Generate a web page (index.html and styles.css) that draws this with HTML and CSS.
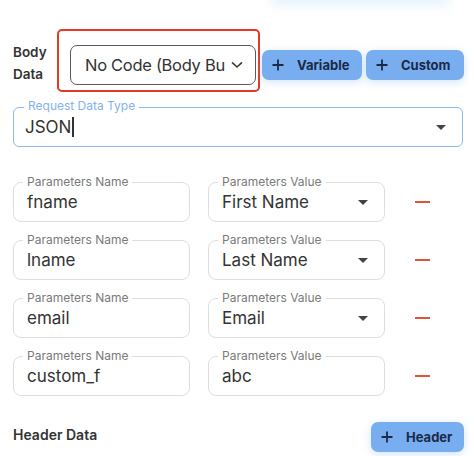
FILE: index.html
```html
<!DOCTYPE html>
<html>
<head>
<meta charset="utf-8">
<link rel="stylesheet" href="styles.css">
</head>
<body>
<div class="page">
  <div class="topglow"></div>
  <div class="body-row">
    <div class="body-label">Body<br>Data</div>
    <div class="highlight">
      <div class="select">
        <span class="select-text">No Code (Body Bu</span>
        <svg class="chev" width="12" height="8" viewBox="0 0 12 8"><path d="M1.5 1.8 L6 6 L10.5 1.8" fill="none" stroke="#3a3a3a" stroke-width="1.6" stroke-linecap="round" stroke-linejoin="round"/></svg>
      </div>
    </div>
    <button class="btn btn-var"><svg class="plus" width="12" height="12" viewBox="0 0 12 12"><path d="M6 0.5 V11.5 M0.5 6 H11.5" stroke="#1b2a48" stroke-width="1.8"/></svg>Variable</button>
    <button class="btn btn-custom"><svg class="plus" width="12" height="12" viewBox="0 0 12 12"><path d="M6 0.5 V11.5 M0.5 6 H11.5" stroke="#1b2a48" stroke-width="1.8"/></svg>Custom</button>
  </div>

  <div class="field field-blue">
    <span class="flabel flabel-blue">Request Data Type</span>
    <span class="fvalue">JSON<span class="cursor"></span></span>
    <span class="caret"></span>
  </div>

  <div class="params">
    <div class="prow">
      <div class="field pfield"><span class="flabel">Parameters Name</span><span class="fvalue">fname</span></div>
      <div class="field pfield"><span class="flabel">Parameters Value</span><span class="fvalue">First Name</span><span class="caret"></span></div>
      <span class="minus"></span>
    </div>
    <div class="prow">
      <div class="field pfield"><span class="flabel">Parameters Name</span><span class="fvalue">lname</span></div>
      <div class="field pfield"><span class="flabel">Parameters Value</span><span class="fvalue">Last Name</span><span class="caret"></span></div>
      <span class="minus"></span>
    </div>
    <div class="prow">
      <div class="field pfield"><span class="flabel">Parameters Name</span><span class="fvalue">email</span></div>
      <div class="field pfield"><span class="flabel">Parameters Value</span><span class="fvalue">Email</span><span class="caret"></span></div>
      <span class="minus"></span>
    </div>
    <div class="prow">
      <div class="field pfield"><span class="flabel">Parameters Name</span><span class="fvalue">custom_f</span></div>
      <div class="field pfield"><span class="flabel">Parameters Value</span><span class="fvalue">abc</span></div>
      <span class="minus"></span>
    </div>
  </div>

  <div class="header-row">
    <span class="header-label">Header Data</span>
    <button class="btn btn-header"><svg class="plus" width="12" height="12" viewBox="0 0 12 12"><path d="M6 0.5 V11.5 M0.5 6 H11.5" stroke="#1b2a48" stroke-width="1.8"/></svg>Header</button>
  </div>
</div>
</body>
</html>
```

FILE: styles.css
```css
* { box-sizing: border-box; }
html, body { margin: 0; padding: 0; background: #fff; }
body {
  font-family: Inter, "Noto Sans", "Liberation Sans", sans-serif;
  color: #333;
  width: 474px;
  height: 456px;
  overflow: hidden;
}
.page { padding: 0 10px 0 13px; position: relative; }
.topglow {
  height: 8px;
  margin: -4px 14px 0 258px;
  border-radius: 8px;
  background: rgba(170, 212, 248, 0.45);
  filter: blur(6px);
}
.body-row {
  display: flex;
  align-items: flex-start;
  margin-top: 25px;
}
.body-label {
  width: 44px;
  font-weight: 600;
  font-size: 13.5px;
  line-height: 22px;
  color: #333;
  margin-top: 12px;
}
.highlight {
  width: 203px;
  height: 63px;
  border: 2px solid #e23a24;
  border-radius: 5px;
  padding: 14px 2px 0 11px;
}
.select {
  height: 40px;
  border: 1px solid #5b5b5b;
  border-radius: 7px;
  display: flex;
  align-items: center;
  padding: 0 12px 0 14px;
  overflow: hidden;
}
.select-text {
  font-size: 16.5px;
  letter-spacing: -0.3px;
  color: #333;
  white-space: nowrap;
  flex: none;
}
.chev { flex: none; margin-left: 6px; }
.btn {
  font-family: inherit;
  border: none;
  background: #78aef0;
  color: #1b2a48;
  font-weight: 700;
  font-size: 13px;
  height: 30px;
  border-radius: 7px;
  display: flex;
  align-items: center;
  padding: 0 0 0 10px;
  box-shadow: 0 2px 8px rgba(120, 175, 240, 0.35);
}
.plus {
  flex: none;
  margin-right: 13px;
}
.btn-var { width: 100px; margin: 21px 0 0 2px; }
.btn-custom { width: 98px; margin: 21px 0 0 4px; }

.field {
  position: relative;
  height: 40px;
  border: 1px solid #dedede;
  border-radius: 8px;
  display: flex;
  align-items: center;
  padding: 0 13px;
}
.field-blue {
  margin-top: 15px;
  width: 450px;
  border: 1.5px solid #8cb9ef;
  border-radius: 6px;
  padding: 0 11px;
}
.flabel {
  position: absolute;
  top: -8px;
  left: 9px;
  background: #fff;
  padding: 0 4px;
  font-size: 12px;
  line-height: 14px;
  color: #7a7a7a;
}
.flabel-blue { color: #86b2ea; left: 10px; top: -9px; }
.fvalue {
  font-size: 17px;
  color: #333;
  display: flex;
  align-items: center;
}
.cursor {
  display: inline-block;
  width: 1.5px;
  height: 20px;
  background: #333;
  margin-left: 1px;
}
.caret {
  position: absolute;
  right: 16px;
  top: 50%;
  margin-top: -2px;
  width: 0; height: 0;
  border-left: 5px solid transparent;
  border-right: 5px solid transparent;
  border-top: 5px solid #444;
}
.params {
  margin-top: 35px;
  display: flex;
  flex-direction: column;
  gap: 18px;
}
.prow {
  display: flex;
  align-items: center;
}
.pfield { width: 177px; }
.pfield + .pfield { margin-left: 18px; }
.minus {
  width: 15px;
  height: 2px;
  background: #e4523b;
  margin-left: 30px;
}
.header-row {
  display: flex;
  align-items: center;
  justify-content: space-between;
  margin-top: 26px;
  width: 451px;
}
.header-label {
  font-weight: 600;
  font-size: 14px;
  color: #333;
  margin-top: -5px;
}
.btn-header { width: 93px; }
```
